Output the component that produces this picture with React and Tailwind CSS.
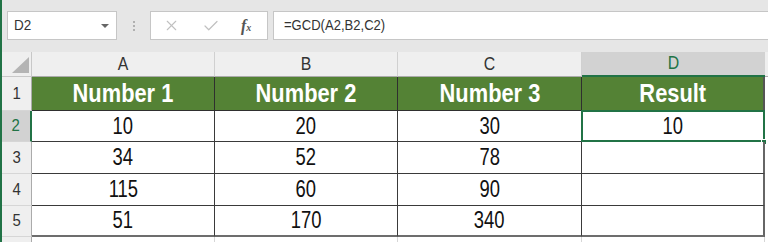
import React from "react";
import { X, Check } from "lucide-react";

const cols = ["A", "B", "C", "D"];
const heads = ["Number 1", "Number 2", "Number 3", "Result"];
const data = [
  ["10", "20", "30", "10"],
  ["34", "52", "78", ""],
  ["115", "60", "90", ""],
  ["51", "170", "340", ""],
];

export default function App() {
  return (
    <div className="w-[768px] h-[242px] overflow-hidden bg-[#e6e6e6] border-l-2 border-[#217346] font-['Liberation_Sans',Arial,sans-serif] flex flex-col">
      {/* Formula bar */}
      <div className="h-[52px] shrink-0 flex items-start pt-[11px] pl-[5px]">
        <div className="w-[110px] h-[29px] bg-white border border-[#c6c6c6] flex items-center justify-between pl-[6px] pr-[7px]">
          <span className="text-[15px] text-[#333] inline-block scale-x-[0.9] origin-left">D2</span>
          <span className="w-0 h-0 border-l-[4px] border-r-[4px] border-t-[4px] border-l-transparent border-r-transparent border-t-[#666]" />
        </div>
        <div className="w-[33px] h-[29px] flex flex-col items-center justify-center gap-[2px]">
          <span className="w-[2px] h-[2px] bg-[#b0b0b0]" />
          <span className="w-[2px] h-[2px] bg-[#b0b0b0]" />
          <span className="w-[2px] h-[2px] bg-[#b0b0b0]" />
        </div>
        <div className="w-[118px] h-[29px] bg-white border border-[#c6c6c6] flex items-center pl-[12px]">
          <X size={17} strokeWidth={1.5} className="text-[#c0c0c0]" />
          <Check size={18} strokeWidth={1.6} className="text-[#c0c0c0] ml-[22px]" />
          <span className="ml-[21px] font-['Liberation_Serif',serif] italic font-bold text-[#555] text-[16px] leading-none">
            f<span className="text-[10px]">x</span>
          </span>
        </div>
        <div className="ml-[5px] flex-1 h-[29px] bg-white border border-[#c6c6c6] border-r-0 flex items-center pl-[10px]">
          <span className="text-[15px] text-[#333] inline-block scale-x-[0.87] origin-left">=GCD(A2,B2,C2)</span>
        </div>
      </div>

      {/* Sheet grid */}
      <div className="grid grid-cols-[30px_183px_183px_184px_183px_1fr] grid-rows-[25px_34px_31px_32px_32px_31px_1fr] flex-1">
        {/* column header row */}
        <div className="bg-[#efefef] border-r border-b border-[#c8c8c8] flex items-end justify-end pr-[2px] pb-[3px]">
          <svg width="17" height="16" viewBox="0 0 17 16">
            <polygon points="17,0 17,16 0,16" fill="#b4b4b4" />
          </svg>
        </div>
        {cols.map((c, i) =>
          i === 3 ? (
            <div key={c} className="bg-[#d2d2d2] border-b-2 border-[#217346] flex items-center justify-center text-[#217346] text-[18px]">
              <span className="inline-block scale-x-[0.88]">{c}</span>
            </div>
          ) : (
            <div key={c} className="bg-[#efefef] border-r border-b border-r-[#d0d0d0] border-b-[#ababab] flex items-center justify-center text-[#333] text-[18px]">
              <span className="inline-block scale-x-[0.88]">{c}</span>
            </div>
          )
        )}
        <div className="bg-[#efefef] border-b border-[#ababab]" />

        {/* row 1: green headers */}
        <div className="bg-[#efefef] border-r border-b border-r-[#ababab] border-b-[#d6d6d6] flex items-center justify-center text-[#333] text-[17px]">
          <span className="inline-block scale-x-[0.88]">1</span>
        </div>
        {heads.map((h, i) => (
          <div
            key={h}
            className={`bg-[#548235] border-b border-[#2f2f2f] flex items-center justify-center text-white font-bold text-[26px] ${
              i === 3 ? "border-r-2 border-r-[#555]" : "border-r"
            }`}
          >
            <span className="inline-block scale-x-[0.84] whitespace-nowrap">{h}</span>
          </div>
        ))}
        <div className="bg-white" />

        {/* data rows */}
        {data.map((row, r) => {
          const last = r === data.length - 1;
          const selRow = r === 0;
          return (
            <React.Fragment key={r}>
              <div
                className={`flex items-center justify-center text-[17px] border-b border-b-[#d6d6d6] ${
                  selRow
                    ? "bg-[#d2d2d2] text-[#217346] border-r-2 border-r-[#217346]"
                    : "bg-[#efefef] text-[#333] border-r border-r-[#ababab]"
                }`}
              >
                <span className="inline-block scale-x-[0.88]">{r + 2}</span>
              </div>
              {row.map((v, c) => (
                <div
                  key={c}
                  className={`relative bg-white flex items-center justify-center text-[23px] text-[#111] ${
                    last ? "border-b-2 border-b-[#6d6d6d]" : "border-b border-b-[#3a3a3a]"
                  } ${c === 3 ? "border-r-2 border-r-[#666]" : "border-r border-r-[#3a3a3a]"}`}
                >
                  <span className="inline-block scale-x-[0.8]">{v}</span>
                  {selRow && c === 3 && (
                    <>
                      <div className="absolute -left-[1px] -top-[1px] -right-[2px] -bottom-[1px] border-2 border-[#217346]" />
                      <div className="absolute -right-[4px] -bottom-[4px] w-[6px] h-[6px] bg-[#217346] border border-white" />
                    </>
                  )}
                </div>
              ))}
              <div className="bg-white" />
            </React.Fragment>
          );
        })}

        {/* row 6 partial */}
        <div className="bg-[#efefef] border-r border-[#ababab]" />
        {cols.map((c) => (
          <div key={c} className="bg-white border-r border-[#d6d6d6]" />
        ))}
        <div className="bg-white" />
      </div>
    </div>
  );
}
